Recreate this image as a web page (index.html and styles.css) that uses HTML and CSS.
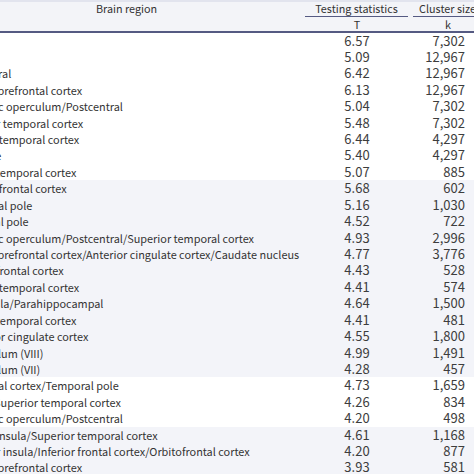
FILE: index.html
```html
<!DOCTYPE html>
<html>
<head>
<meta charset="utf-8">
<link rel="stylesheet" href="styles.css">
</head>
<body>
<div class="frame">
<table class="results">
  <colgroup>
    <col class="c-region">
    <col class="c-t">
    <col class="c-k">
  </colgroup>
  <thead>
    <tr class="h1">
      <th class="region-head" rowspan="2">Brain region</th>
      <th><div class="group">Testing statistics</div></th>
      <th><div class="group">Cluster size</div></th>
    </tr>
    <tr class="h2">
      <th>T</th>
      <th>k</th>
    </tr>
  </thead>
  <tbody>
    <tr><td>Cuneus</td><td class="t">6.57</td><td class="k">7,302</td></tr>
    <tr><td>Insula</td><td class="t">5.09</td><td class="k">12,967</td></tr>
    <tr><td>Precentral</td><td class="t">6.42</td><td class="k">12,967</td></tr>
    <tr><td>Ventral prefrontal cortex</td><td class="t">6.13</td><td class="k">12,967</td></tr>
    <tr><td>Rolandic operculum/Postcentral</td><td class="t">5.04</td><td class="k">7,302</td></tr>
    <tr><td>Anterior temporal cortex</td><td class="t">5.48</td><td class="k">7,302</td></tr>
    <tr><td>Inferior temporal cortex</td><td class="t">6.44</td><td class="k">4,297</td></tr>
    <tr><td>Caudate</td><td class="t">5.40</td><td class="k">4,297</td></tr>
    <tr><td>Middle temporal cortex</td><td class="t">5.07</td><td class="k">885</td></tr>
    <tr class="alt"><td>Inferior frontal cortex</td><td class="t">5.68</td><td class="k">602</td></tr>
    <tr class="alt"><td>Temporal pole</td><td class="t">5.16</td><td class="k">1,030</td></tr>
    <tr class="alt"><td>Occipital pole</td><td class="t">4.52</td><td class="k">722</td></tr>
    <tr class="alt"><td>Rolandic operculum/Postcentral/Superior temporal cortex</td><td class="t">4.93</td><td class="k">2,996</td></tr>
    <tr class="alt"><td>Ventral prefrontal cortex/Anterior cingulate cortex/Caudate nucleus</td><td class="t">4.77</td><td class="k">3,776</td></tr>
    <tr class="alt"><td>Middle frontal cortex</td><td class="t">4.43</td><td class="k">528</td></tr>
    <tr class="alt"><td>Inferior temporal cortex</td><td class="t">4.41</td><td class="k">574</td></tr>
    <tr class="alt"><td>Amygdala/Parahippocampal</td><td class="t">4.64</td><td class="k">1,500</td></tr>
    <tr class="alt"><td>Middle temporal cortex</td><td class="t">4.41</td><td class="k">481</td></tr>
    <tr class="alt"><td>Posterior cingulate cortex</td><td class="t">4.55</td><td class="k">1,800</td></tr>
    <tr class="alt"><td>Cerebellum (VIII)</td><td class="t">4.99</td><td class="k">1,491</td></tr>
    <tr class="alt"><td>Cerebellum (VII)</td><td class="t">4.28</td><td class="k">457</td></tr>
    <tr><td>Temporal cortex/Temporal pole</td><td class="t">4.73</td><td class="k">1,659</td></tr>
    <tr><td>Insula/Superior temporal cortex</td><td class="t">4.26</td><td class="k">834</td></tr>
    <tr><td>Rolandic operculum/Postcentral</td><td class="t">4.20</td><td class="k">498</td></tr>
    <tr class="alt"><td>Middle insula/Superior temporal cortex</td><td class="t">4.61</td><td class="k">1,168</td></tr>
    <tr class="alt"><td>Anterior insula/Inferior frontal cortex/Orbitofrontal cortex</td><td class="t">4.20</td><td class="k">877</td></tr>
    <tr class="alt"><td>Ventral prefrontal cortex</td><td class="t">3.93</td><td class="k">581</td></tr>
  </tbody>
</table>
</div>
</body>
</html>
```
FILE: styles.css
```css
html, body {
  margin: 0;
  padding: 0;
  background: #ffffff;
}
.frame {
  width: 474px;
  height: 474px;
  overflow: hidden;
}
.results {
  border-collapse: collapse;
  table-layout: fixed;
  width: 535px;
  margin-left: -50px;
  font-family: "Noto Sans CJK KR", "Noto Sans", sans-serif;
  color: #333333;
}
.c-region { width: 353px; }
.c-t { width: 108px; }
.c-k { width: 74px; }

thead th {
  font-weight: normal;
  font-size: 10.8px;
  color: #333333;
  background: #f3f4f8;
  padding: 0;
  white-space: nowrap;
}
thead {
  border-top: 2px solid #e2e4ee;
  border-bottom: 2px solid #555a82;
}
.h1 th {
  height: 14.5px;
  line-height: 13.5px;
  vertical-align: top;
}
.region-head {
  text-align: center;
  vertical-align: top;
}
.group {
  margin: 0 3px 0 2px;
  border-bottom: 1px solid #555a82;
}
.h2 th {
  height: 14px;
  line-height: 14px;
}
tbody td {
  font-size: 10.9px;
  height: 16.42px;
  line-height: 16.42px;
  padding: 0;
  white-space: nowrap;
  overflow: visible;
}
tbody td:first-child {
  padding-left: 9px;
  text-align: left;
}
tbody td.t {
  font-size: 13px;
  text-align: center;
  color: #3d3d3d;
}
tbody td.k {
  font-size: 13px;
  text-align: right;
  padding-right: 20px;
  color: #3d3d3d;
}
tr.alt td {
  background: #f3f4f9;
}
```
